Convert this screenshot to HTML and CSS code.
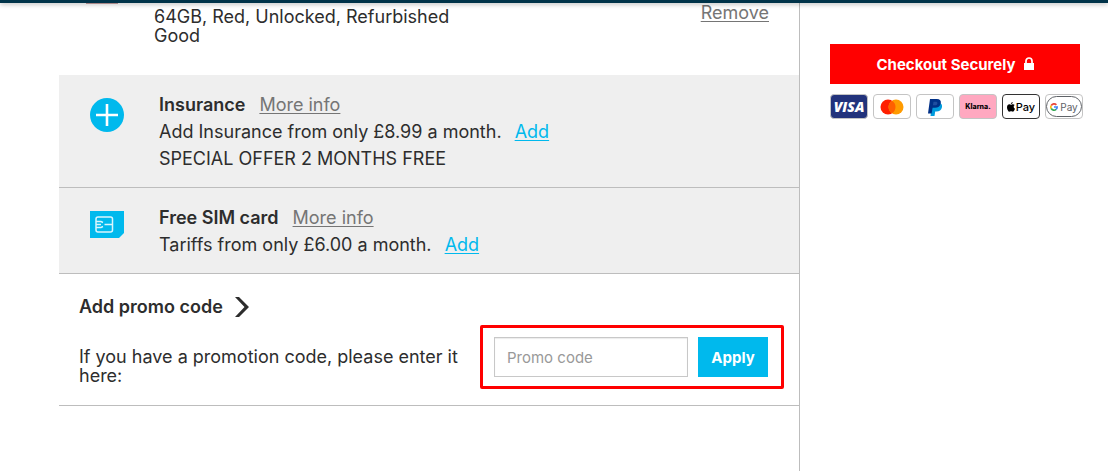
FILE: index.html
```html
<!DOCTYPE html>
<html lang="en">
<head>
    <meta charset="UTF-8">
    <title>Your Basket</title>
    <meta name="viewport" content="width=device-width, initial-scale=1.0">
    <link rel="stylesheet" href="styles.css">
</head>
<body>
    <header class="topbar"></header>
    <div class="page">
        <main class="basket">
            <section class="product">
                <div class="product-image"></div>
                <p class="product-spec">64GB, Red, Unlocked, Refurbished Good</p>
                <a class="link-grey" href="#">Remove</a>
            </section>

            <section class="extra">
                <svg class="extra-icon" width="34" height="34" viewBox="0 0 34 34" aria-hidden="true">
                    <circle cx="17" cy="17" r="17" fill="#00b9ed"/>
                    <path d="M17 6v22M6 17h22" stroke="#fff" stroke-width="2.6" fill="none"/>
                </svg>
                <div class="extra-text">
                    <div class="extra-title"><h2>Insurance</h2><a class="link-grey" href="#">More info</a></div>
                    <p>Add Insurance from only £8.99 a month. <a class="link-blue" href="#">Add</a></p>
                    <p>SPECIAL OFFER 2 MONTHS FREE</p>
                </div>
            </section>

            <section class="extra">
                <svg class="extra-icon" width="34" height="27" viewBox="0 0 34 27" aria-hidden="true">
                    <path d="M0 0h34v22l-5 5H0z" fill="#00b9ed"/>
                    <rect x="6" y="6" width="16.5" height="15" rx="2" fill="none" stroke="#d9f5fd" stroke-width="1.5"/>
                    <path d="M6 10.5h5l2 1M6 13.5h5M6 16.5h5l2-1M22.5 13.5h-8" fill="none" stroke="#d9f5fd" stroke-width="1.5"/>
                </svg>
                <div class="extra-text">
                    <div class="extra-title"><h2>Free SIM card</h2><a class="link-grey" href="#">More info</a></div>
                    <p>Tariffs from only £6.00 a month. <a class="link-blue" href="#">Add</a></p>
                </div>
            </section>

            <section class="promo">
                <h2 class="promo-title">Add promo code
                    <svg width="14" height="20" viewBox="0 0 14 20" aria-hidden="true">
                        <path d="M0 0h4l10 10-10 10H0l9.500-10z" fill="#2d2d2d"/>
                    </svg>
                </h2>
                <form class="promo-form">
                    <label for="promoCode">If you have a promotion code, please enter it here:</label>
                    <div class="promo-box">
                        <input type="text" id="promoCode" placeholder="Promo code">
                        <button type="submit">Apply</button>
                    </div>
                </form>
            </section>
        </main>

        <aside class="checkout">
            <button class="checkout-btn" type="button">Checkout Securely
                <svg width="10" height="14" viewBox="0 0 10 14" aria-hidden="true">
                    <path d="M2 6V4a3 3 0 0 1 6 0v2" fill="none" stroke="#fff" stroke-width="1.7"/>
                    <path d="M0 6h10v7H0z" fill="#fff"/>
                </svg>
            </button>
            <ul class="cards">
                <li class="card visa">VISA</li>
                <li class="card">
                    <svg width="24" height="16" viewBox="0 0 24 16" role="img" aria-label="Mastercard">
                        <circle cx="8" cy="8" r="7.5" fill="#ff1f00"/>
                        <circle cx="16" cy="8" r="7.5" fill="#ff9b00"/>
                        <path d="M12 1.65a7.5 7.5 0 0 1 0 12.7a7.5 7.5 0 0 1 0-12.7z" fill="#ff6000"/>
                    </svg>
                </li>
                <li class="card">
                    <svg width="16" height="18" viewBox="0 0 16 18" role="img" aria-label="PayPal">
                        <path d="M5 5h6.5c3 0 4 2 3.4 4.5-.6 2.8-2.6 4-5.3 4H8.2L7.5 18H3.5z" fill="#009cde"/>
                        <path d="M3 1h6.8c3.2 0 4.5 1.8 4 4.3-.6 3-2.8 4.5-5.8 4.5H5.6L4.6 15.5H1z" fill="#003087"/>
                        <path d="M6.5 3.8l-.6 3.5h2c1.4 0 2.3-.6 2.5-1.9.2-1.1-.5-1.6-1.7-1.6z" fill="#1e4ea0"/>
                    </svg>
                </li>
                <li class="card klarna">Klarna.</li>
                <li class="card apple">
                    <svg width="8" height="10" viewBox="0 0 8 10" aria-hidden="true">
                        <path d="M5.7 0c.1 1-.7 2-1.800 2.1C3.8 1.1 4.7.1 5.7 0zM4 2.700c.5 0 1-.5 2-.5.7 0 1.3.4 1.7.9-1.500.9-1.300 3 .3 3.600C7.500 8.200 6.700 9.700 5.800 9.700c-.7 0-.9-.4-1.700-.4s-1.100.4-1.700.4C1.300 9.700 0 7.300 0 5.400c0-2 1.200-3.100 2.300-3.100.8 0 1.300.4 1.700.4z" fill="#000"/>
                    </svg>
                    Pay
                </li>
                <li class="card google">
                    <span class="google-pill">
                        <svg width="8" height="8" viewBox="0 0 8 8" aria-hidden="true">
                            <g fill="none" stroke-width="1.6">
                                <path d="M6.4 1.9A3.2 3.2 0 0 0 1.2 2.5" stroke="#ea4335"/>
                                <path d="M1.2 2.5a3.2 3.2 0 0 0 0 3" stroke="#fbbc04"/>
                                <path d="M1.2 5.5A3.2 3.2 0 0 0 6.1 6.4" stroke="#34a853"/>
                                <path d="M6.1 6.4A3.2 3.2 0 0 0 7.2 4H4" stroke="#4285f4"/>
                            </g>
                        </svg>
                        Pay
                    </span>
                </li>
            </ul>
        </aside>
    </div>
</body>
</html>
```
FILE: styles.css
```css
* { box-sizing: border-box; }
body { margin: 0; background: #fff; color: #2d2d2d; font-family: Inter, "Open Sans", sans-serif; font-size: 18px; line-height: 19px; }
h2, p, ul { margin: 0; padding: 0; }
h2 { font-size: 18px; font-weight: 600; }
button, input { font-family: inherit; border-radius: 0; }

.topbar { position: fixed; top: 0; left: 0; right: 0; height: 3px; background: #003349; box-shadow: 0 1px 5px rgba(0, 0, 0, 0.35); }
.page { display: grid; grid-template-columns: minmax(0, 1fr) 308px; padding-left: 59px; }

.basket { border-right: 1px solid #bdbdbd; padding-bottom: 65px; }
.link-grey { color: #757575; }
.link-blue { color: #00b9ed; margin-left: 8px; }
.link-grey, .link-blue { text-decoration-thickness: 1px; text-underline-offset: 2px; }

.product { display: flex; align-items: flex-start; padding: 7px 30px 30px 27px; }
.product-image { width: 32px; height: 4px; margin: -7px 36px 0 0; background: #c9a0a0; }
.product-spec { width: 310px; }
.product .link-grey { margin-left: auto; margin-top: -4px; }

.extra { display: flex; align-items: flex-start; background: #efefef; border-bottom: 1px solid #bdbdbd; padding: 16px 31px 15px; line-height: 27px; }
.extra-icon { margin: 7px 35px 0 0; }
.extra-title { display: flex; gap: 14px; }

.promo { border-bottom: 1px solid #bdbdbd; padding: 23px 15px 16px 20px; }
.promo-title { display: flex; align-items: center; gap: 12px; line-height: 20px; margin-bottom: 8px; }
.promo-form { display: flex; justify-content: space-between; align-items: flex-end; }
.promo-form label { width: 390px; padding-bottom: 4px; }
.promo-box { display: flex; gap: 10px; border: 3px solid #f00; border-radius: 2px; padding: 9px 13px 9px 11px; }
.promo-box input { width: 194px; height: 40px; padding: 0 12px; border: 1px solid #c8c8c8; box-shadow: inset 0 1px 1px rgba(0, 0, 0, 0.08); font-size: 15px; color: #2d2d2d; }
.promo-box input::placeholder { color: #999; }
.promo-box button { width: 70px; height: 40px; padding: 0; border: 0; background: #00b9ed; color: #fff; font-size: 15px; font-weight: 700; }

.checkout { min-width: 0; padding: 44px 28px 0 30px; }
.checkout-btn { display: flex; align-items: center; justify-content: center; gap: 8px; width: 100%; height: 40px; border: 0; background: #f00; color: #fff; font-size: 15px; font-weight: 700; }
.cards { display: flex; gap: 5px; margin-top: 10px; list-style: none; }
.card { display: flex; flex: none; align-items: center; justify-content: center; gap: 1px; width: 38px; height: 25px; border: 1px solid #c4c4c4; border-radius: 4px; background: #fff; color: #000; line-height: 12px; }
.visa { background: #22337c; color: #fff; font: italic 800 14px "Open Sans", sans-serif; }
.klarna { background: #ffa8c0; font-size: 7px; font-weight: 800; }
.apple { border-color: #333; font-size: 11px; font-weight: 500; }
.google-pill { display: flex; flex: none; align-items: center; justify-content: center; gap: 2px; width: 36px; height: 21px; border: 1px solid #5f6368; border-radius: 11px; color: #5f6368; font-size: 10px; }
```
